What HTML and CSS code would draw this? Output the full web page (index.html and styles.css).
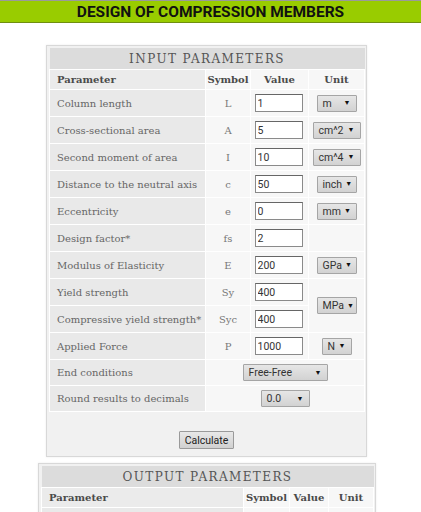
FILE: index.html
```html
<!DOCTYPE html>
<html>
<head>
<meta charset="utf-8">
<link rel="stylesheet" href="styles.css">
</head>
<body>
<div class="topbar">DESIGN OF COMPRESSION MEMBERS</div>

<div class="box box-in">
  <table class="tbl tbl-in">
    <colgroup><col class="c-par"><col class="c-sym"><col class="c-val"><col class="c-unit"></colgroup>
    <tr><th colspan="4" class="title">INPUT PARAMETERS</th></tr>
    <tr class="hrow"><th class="par">Parameter</th><th>Symbol</th><th>Value</th><th>Unit</th></tr>
    <tr><td class="par">Column length</td><td class="sym">L</td><td><input class="inp" value="1"></td><td><span class="sel w40">m<i>&#9660;</i></span></td></tr>
    <tr><td class="par">Cross-sectional area</td><td class="sym">A</td><td><input class="inp" value="5"></td><td><span class="sel w48">cm^2<i>&#9660;</i></span></td></tr>
    <tr><td class="par">Second moment of area</td><td class="sym">I</td><td><input class="inp" value="10"></td><td><span class="sel w48">cm^4<i>&#9660;</i></span></td></tr>
    <tr><td class="par">Distance to the neutral axis</td><td class="sym">c</td><td><input class="inp" value="50"></td><td><span class="sel w40">inch<i>&#9660;</i></span></td></tr>
    <tr><td class="par">Eccentricity</td><td class="sym">e</td><td><input class="inp" value="0"></td><td><span class="sel w40">mm<i>&#9660;</i></span></td></tr>
    <tr><td class="par">Design factor*</td><td class="sym">fs</td><td><input class="inp" value="2"></td><td></td></tr>
    <tr><td class="par">Modulus of Elasticity</td><td class="sym">E</td><td><input class="inp" value="200"></td><td><span class="sel w40">GPa<i>&#9660;</i></span></td></tr>
    <tr><td class="par">Yield strength</td><td class="sym">Sy</td><td><input class="inp" value="400"></td><td rowspan="2"><span class="sel w40">MPa<i>&#9660;</i></span></td></tr>
    <tr><td class="par">Compressive yield strength*</td><td class="sym">Syc</td><td><input class="inp" value="400"></td></tr>
    <tr><td class="par">Applied Force</td><td class="sym">P</td><td><input class="inp" value="1000"></td><td><span class="sel w30">N<i>&#9660;</i></span></td></tr>
    <tr class="short"><td class="par">End conditions</td><td colspan="3"><span class="sel w85">Free-Free<i>&#9660;</i></span></td></tr>
    <tr class="short"><td class="par">Round results to decimals</td><td colspan="3"><span class="sel w49">0.0<i>&#9660;</i></span></td></tr>
  </table>
  <div class="actions"><button class="btn">Calculate</button></div>
</div>

<div class="box box-out">
  <table class="tbl tbl-out">
    <colgroup><col class="o-par"><col class="o-sym"><col class="o-val"><col class="o-unit"></colgroup>
    <tr><th colspan="4" class="title">OUTPUT PARAMETERS</th></tr>
    <tr class="hrow"><th class="par">Parameter</th><th>Symbol</th><th>Value</th><th>Unit</th></tr>
    <tr><td class="par">&nbsp;</td><td></td><td></td><td></td></tr>
  </table>
</div>
</body>
</html>
```

FILE: styles.css
```css
html, body {
  margin: 0;
  padding: 0;
  background: #ffffff;
}
body {
  font-family: "DejaVu Serif", "Liberation Serif", serif;
  color: #666;
}
.topbar {
  height: 21px;
  border-top: 1px solid #9a9a9a;
  border-bottom: 1px solid #6f8f10;
  background: #99cc00;
  color: #111;
  font-family: Roboto, "Liberation Sans", sans-serif;
  font-weight: bold;
  font-size: 15.5px;
  line-height: 22px;
  text-align: center;
}
.box {
  background: #f1f1f1;
  border: 1px solid #d8d8d8;
  box-shadow: 0 0 2px rgba(0,0,0,0.08);
  padding: 2px;
}
.box-in {
  width: 315px;
  margin: 22px 0 0 46px;
}
.box-out {
  width: 332px;
  margin: 6px 0 0 38px;
  padding-bottom: 0;
}
.tbl {
  width: 100%;
  border-collapse: collapse;
  table-layout: fixed;
}
.tbl th, .tbl td {
  border: 1px solid #ffffff;
  padding: 0;
  text-align: center;
  font-size: 10px;
  font-weight: normal;
}
.c-par { width: 156px; }
.c-sym { width: 45px; }
.c-val { width: 58px; }
.c-unit { width: 56px; }
.o-par { width: 202px; }
.o-sym { width: 46px; }
.o-val { width: 39px; }
.o-unit { width: 45px; }
.tbl .title {
  background: #dcdcdc;
  height: 21px;
  font-size: 12px;
  letter-spacing: 1.4px;
  color: #555;
  border-top: 0;
  border-left: 0;
  border-right: 0;
}
.tbl .hrow th {
  height: 19px;
  font-weight: bold;
  color: #4a4a4a;
  background: #f7f7f7;
}
.tbl .hrow th.par {
  background: #ebebeb;
  text-align: left;
  padding-left: 7px;
}
.tbl td {
  height: 26px;
  background: #f7f7f7;
}
.tbl tr.short td {
  height: 25px;
}
.tbl td.par {
  background: #e9e9e9;
  text-align: left;
  padding-left: 7px;
  white-space: nowrap;
}
.tbl td.sym {
  color: #777;
}
.inp {
  box-sizing: border-box;
  width: 48px;
  height: 18px;
  margin: 0 0 0 -2px;
  padding: 0 2px;
  border: 1px solid #8a8a8a;
  border-top-color: #666;
  background: #fff;
  font-family: Roboto, "Liberation Sans", sans-serif;
  font-size: 10.5px;
  color: #333;
  vertical-align: middle;
}
.sel {
  box-sizing: border-box;
  display: inline-flex;
  align-items: center;
  justify-content: space-between;
  height: 17px;
  padding: 0 5px 0 5px;
  border: 1px solid #a5a5a5;
  border-radius: 1px;
  background: linear-gradient(#e6e6e6, #d2d2d2);
  font-family: Roboto, "Liberation Sans", sans-serif;
  font-size: 10.5px;
  color: #333;
  vertical-align: middle;
}
.sel i {
  font-style: normal;
  font-size: 7px;
  color: #111;
  margin-left: 3px;
}
.w40 { width: 40px; }
.w48 { width: 48px; }
.w30 { width: 30px; }
.w85 { width: 85px; }
.w49 { width: 49px; }
.actions {
  display: flex;
  justify-content: center;
  padding: 19px 0 5px 0;
}
.btn {
  height: 18px;
  padding: 0 5px;
  border: 1px solid #9a9a9a;
  border-radius: 1px;
  background: linear-gradient(#e8e8e8, #d0d0d0);
  font-family: Roboto, "Liberation Sans", sans-serif;
  font-size: 10.5px;
  color: #222;
}
```
